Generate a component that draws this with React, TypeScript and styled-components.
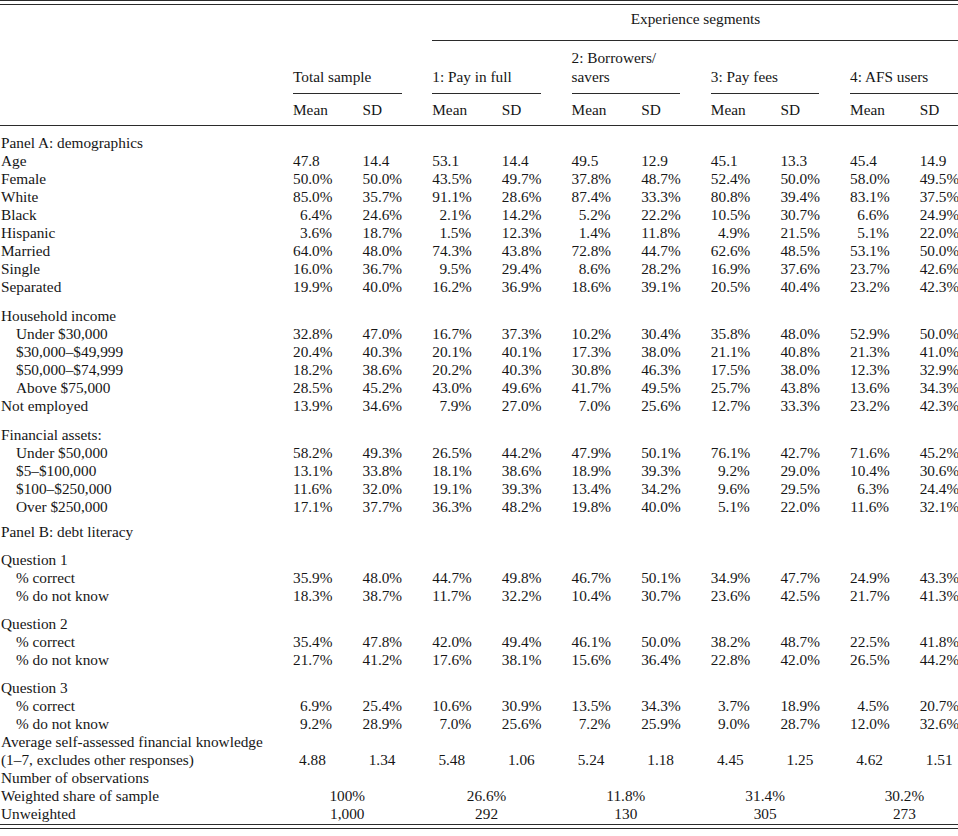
import React from 'react';
import styled, { createGlobalStyle } from 'styled-components';

const GlobalStyle = createGlobalStyle`
  html, body {
    margin: 0;
    padding: 0;
    background: #fff;
  }
  body {
    font-family: "Liberation Serif", "Times New Roman", serif;
    font-size: 15.3px;
    color: #161616;
  }
`;

type Align = 'left' | 'center' | 'right';

type DataRow = {
  label: string;
  indent?: boolean;
  values?: string[];
  align?: Align;
  gap?: number;
};

const rows: DataRow[] = [
  { label: 'Panel A: demographics' },
  { label: 'Age', align: 'left', values: ['47.8', '14.4', '53.1', '14.4', '49.5', '12.9', '45.1', '13.3', '45.4', '14.9'] },
  { label: 'Female', values: ['50.0%', '50.0%', '43.5%', '49.7%', '37.8%', '48.7%', '52.4%', '50.0%', '58.0%', '49.5%'] },
  { label: 'White', values: ['85.0%', '35.7%', '91.1%', '28.6%', '87.4%', '33.3%', '80.8%', '39.4%', '83.1%', '37.5%'] },
  { label: 'Black', values: ['6.4%', '24.6%', '2.1%', '14.2%', '5.2%', '22.2%', '10.5%', '30.7%', '6.6%', '24.9%'] },
  { label: 'Hispanic', values: ['3.6%', '18.7%', '1.5%', '12.3%', '1.4%', '11.8%', '4.9%', '21.5%', '5.1%', '22.0%'] },
  { label: 'Married', values: ['64.0%', '48.0%', '74.3%', '43.8%', '72.8%', '44.7%', '62.6%', '48.5%', '53.1%', '50.0%'] },
  { label: 'Single', values: ['16.0%', '36.7%', '9.5%', '29.4%', '8.6%', '28.2%', '16.9%', '37.6%', '23.7%', '42.6%'] },
  { label: 'Separated', values: ['19.9%', '40.0%', '16.2%', '36.9%', '18.6%', '39.1%', '20.5%', '40.4%', '23.2%', '42.3%'] },

  { label: 'Household income', gap: 11 },
  { label: 'Under $30,000', indent: true, values: ['32.8%', '47.0%', '16.7%', '37.3%', '10.2%', '30.4%', '35.8%', '48.0%', '52.9%', '50.0%'] },
  { label: '$30,000–$49,999', indent: true, values: ['20.4%', '40.3%', '20.1%', '40.1%', '17.3%', '38.0%', '21.1%', '40.8%', '21.3%', '41.0%'] },
  { label: '$50,000–$74,999', indent: true, values: ['18.2%', '38.6%', '20.2%', '40.3%', '30.8%', '46.3%', '17.5%', '38.0%', '12.3%', '32.9%'] },
  { label: 'Above $75,000', indent: true, values: ['28.5%', '45.2%', '43.0%', '49.6%', '41.7%', '49.5%', '25.7%', '43.8%', '13.6%', '34.3%'] },
  { label: 'Not employed', values: ['13.9%', '34.6%', '7.9%', '27.0%', '7.0%', '25.6%', '12.7%', '33.3%', '23.2%', '42.3%'] },

  { label: 'Financial assets:', gap: 11 },
  { label: 'Under $50,000', indent: true, values: ['58.2%', '49.3%', '26.5%', '44.2%', '47.9%', '50.1%', '76.1%', '42.7%', '71.6%', '45.2%'] },
  { label: '$5–$100,000', indent: true, values: ['13.1%', '33.8%', '18.1%', '38.6%', '18.9%', '39.3%', '9.2%', '29.0%', '10.4%', '30.6%'] },
  { label: '$100–$250,000', indent: true, values: ['11.6%', '32.0%', '19.1%', '39.3%', '13.4%', '34.2%', '9.6%', '29.5%', '6.3%', '24.4%'] },
  { label: 'Over $250,000', indent: true, values: ['17.1%', '37.7%', '36.3%', '48.2%', '19.8%', '40.0%', '5.1%', '22.0%', '11.6%', '32.1%'] },

  { label: 'Panel B: debt literacy', gap: 7 },
  { label: 'Question 1', gap: 10 },
  { label: '% correct', indent: true, values: ['35.9%', '48.0%', '44.7%', '49.8%', '46.7%', '50.1%', '34.9%', '47.7%', '24.9%', '43.3%'] },
  { label: '% do not know', indent: true, values: ['18.3%', '38.7%', '11.7%', '32.2%', '10.4%', '30.7%', '23.6%', '42.5%', '21.7%', '41.3%'] },
  { label: 'Question 2', gap: 10 },
  { label: '% correct', indent: true, values: ['35.4%', '47.8%', '42.0%', '49.4%', '46.1%', '50.0%', '38.2%', '48.7%', '22.5%', '41.8%'] },
  { label: '% do not know', indent: true, values: ['21.7%', '41.2%', '17.6%', '38.1%', '15.6%', '36.4%', '22.8%', '42.0%', '26.5%', '44.2%'] },
  { label: 'Question 3', gap: 10 },
  { label: '% correct', indent: true, values: ['6.9%', '25.4%', '10.6%', '30.9%', '13.5%', '34.3%', '3.7%', '18.9%', '4.5%', '20.7%'] },
  { label: '% do not know', indent: true, values: ['9.2%', '28.9%', '7.0%', '25.6%', '7.2%', '25.9%', '9.0%', '28.7%', '12.0%', '32.6%'] },
  { label: 'Average self-assessed financial knowledge' },
  { label: '(1–7, excludes other responses)', align: 'center', values: ['4.88', '1.34', '5.48', '1.06', '5.24', '1.18', '4.45', '1.25', '4.62', '1.51'] },
  { label: 'Number of observations' },
];

const totals = [
  { label: 'Weighted share of sample', values: ['100%', '26.6%', '11.8%', '31.4%', '30.2%'] },
  { label: 'Unweighted', values: ['1,000', '292', '130', '305', '273'] },
];

const groups = ['Total sample', '1: Pay in full', '2: Borrowers/\nsavers', '3: Pay fees', '4: AFS users'];

const App: React.FC = () => {
  return (
    <>
      <GlobalStyle />
      <Page>
        <Table>
          <Head>
            <Row>
              <Spanner>Experience segments</Spanner>
            </Row>
            <Row>
              {groups.map((g, i) => (
                <GroupTitle key={i} $col={i + 2}>
                  {g.split('\n').map((line, j) => (
                    <React.Fragment key={j}>
                      {j > 0 && <br />}
                      {line}
                    </React.Fragment>
                  ))}
                </GroupTitle>
              ))}
            </Row>
            <Row>
              {groups.map((_, i) => (
                <Group key={i} $col={i + 2}>
                  <Num $align="left">Mean</Num>
                  <Num $align="left">SD</Num>
                </Group>
              ))}
            </Row>
          </Head>
          <Body>
            {rows.map((r, i) => (
              <Row key={i} $gap={r.gap}>
                <Label $indent={r.indent}>{r.label}</Label>
                {r.values &&
                  [0, 1, 2, 3, 4].map((g) => (
                    <Group key={g} $col={g + 2}>
                      <Num $align={r.align || 'right'}>{r.values![g * 2]}</Num>
                      <Num $align={r.align || 'right'}>{r.values![g * 2 + 1]}</Num>
                    </Group>
                  ))}
              </Row>
            ))}
            {totals.map((t, i) => (
              <Row key={'t' + i}>
                <Label>{t.label}</Label>
                {t.values.map((v, g) => (
                  <Merged key={g} $col={g + 2}>
                    {v}
                  </Merged>
                ))}
              </Row>
            ))}
          </Body>
        </Table>
      </Page>
    </>
  );
};

const Page = styled.div`
  width: 958px;
  overflow: hidden;
`;

const Table = styled.div`
  border-top: 1px solid #2b2b2b;
  border-bottom: 1px solid #2b2b2b;
  padding: 3px 0;
`;

const Head = styled.div`
  border-top: 1px solid #2b2b2b;
  border-bottom: 1px solid #2b2b2b;
`;

const Body = styled.div`
  border-bottom: 1px solid #2b2b2b;
  padding: 8px 0 1px;
`;

// first column is 293px wide including the 30.7px gap before "Total sample"
const Row = styled.div<{ $gap?: number }>`
  display: grid;
  grid-template-columns: 262.3px repeat(5, 108.6px);
  column-gap: 30.7px;
  line-height: 18px;
  margin-top: ${(p) => p.$gap || 0}px;
  white-space: nowrap;
`;

const Label = styled.div<{ $indent?: boolean }>`
  grid-column: 1;
  padding-left: ${(p) => (p.$indent ? 16 : 1)}px;
`;

const Spanner = styled.div`
  grid-column: 3 / -1;
  text-align: center;
  padding: 5px 0 12px;
  border-bottom: 1px solid #2b2b2b;
`;

const GroupTitle = styled.div<{ $col: number }>`
  grid-column: ${(p) => p.$col};
  align-self: end;
  line-height: 19px;
  padding: 7px 0 7px;
  border-bottom: 1px solid #2b2b2b;
`;

const Group = styled.div<{ $col: number }>`
  grid-column: ${(p) => p.$col};
  display: flex;
  justify-content: space-between;

  ${Head} & {
    padding: 7px 0 6px;
  }
`;

const Num = styled.span<{ $align: Align }>`
  width: 39px;
  text-align: ${(p) => p.$align};
`;

const Merged = styled.div<{ $col: number }>`
  grid-column: ${(p) => p.$col};
  text-align: center;
`;

export default App;
